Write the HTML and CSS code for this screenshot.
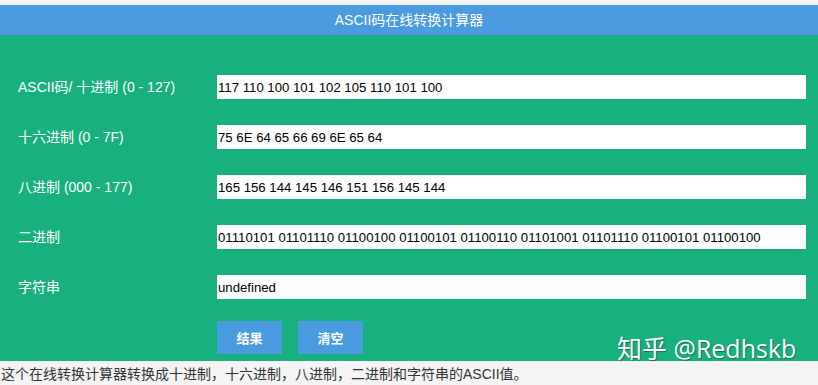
FILE: index.html
```html
<!DOCTYPE html>
<html lang="zh-CN">
<head>
<meta charset="utf-8">
<title>ASCII码在线转换计算器</title>
<link rel="stylesheet" href="styles.css">
</head>
<body>
<div class="page">
  <div class="top-gap"></div>
  <div class="title-bar">ASCII码在线转换计算器</div>
  <div class="panel">
    <div class="form">
      <label class="lbl">ASCII码/ 十进制 (0 - 127)</label>
      <input class="field" type="text" value="117 110 100 101 102 105 110 101 100">
      <label class="lbl">十六进制 (0 - 7F)</label>
      <input class="field" type="text" value="75 6E 64 65 66 69 6E 65 64">
      <label class="lbl">八进制 (000 - 177)</label>
      <input class="field" type="text" value="165 156 144 145 146 151 156 145 144">
      <label class="lbl">二进制</label>
      <input class="field" type="text" value="01110101 01101110 01100100 01100101 01100110 01101001 01101110 01100101 01100100">
      <label class="lbl">字符串</label>
      <input class="field" type="text" value="undefined">
      <div></div>
      <div class="actions">
        <button class="btn">结果</button>
        <button class="btn">清空</button>
      </div>
    </div>
  </div>
  <div class="desc">这个在线转换计算器转换成十进制，十六进制，八进制，二进制和字符串的ASCII值。</div>
  <div class="watermark">知乎 @Redhskb</div>
</div>
</body>
</html>
```
FILE: styles.css
```css
html, body {
  margin: 0;
  padding: 0;
}
body {
  background: #f4f4f4;
  font-family: "Liberation Sans", "Noto Sans CJK SC", sans-serif;
  width: 818px;
  height: 385px;
  overflow: hidden;
}
.page {
  position: relative;
  width: 818px;
  height: 385px;
}
.top-gap {
  height: 5px;
  background: #f4f4f4;
}
.title-bar {
  height: 30px;
  line-height: 30px;
  background: #4a9be0;
  color: #ffffff;
  text-align: center;
  font-size: 14px;
}
.panel {
  background: #19b080;
  height: 326px;
  box-sizing: border-box;
  padding: 40px 12px 0 18px;
}
.form {
  display: grid;
  grid-template-columns: 199px 589px;
  grid-auto-rows: 24px;
  row-gap: 26px;
  align-items: center;
}
.lbl {
  color: #ffffff;
  font-size: 14px;
  line-height: 24px;
}
.field {
  height: 24px;
  width: 589px;
  box-sizing: border-box;
  border: 0;
  margin: 0;
  padding: 0 1px;
  background: #ffffff;
  color: #000000;
  font-family: "Liberation Sans", sans-serif;
  font-size: 13.2px;
  outline: none;
}
.actions {
  display: flex;
  gap: 16px;
  margin-top: -4px;
  align-self: start;
}
.btn {
  width: 65px;
  height: 33px;
  border: 0;
  margin: 0;
  padding: 0;
  background: #4a9be0;
  color: #ffffff;
  font-family: "Noto Sans CJK SC", sans-serif;
  font-weight: bold;
  font-size: 13px;
}
.desc {
  height: 24px;
  line-height: 26px;
  padding-left: 1px;
  color: #333333;
  font-size: 14px;
  white-space: nowrap;
}
.watermark {
  position: absolute;
  left: 617px;
  top: 332px;
  color: #ffffff;
  font-family: "Open Sans", "Noto Sans CJK SC", sans-serif;
  font-size: 25px;
  line-height: 32px;
  text-shadow: 1px 1px 1px rgba(0, 0, 0, 0.35);
  white-space: nowrap;
}
```
